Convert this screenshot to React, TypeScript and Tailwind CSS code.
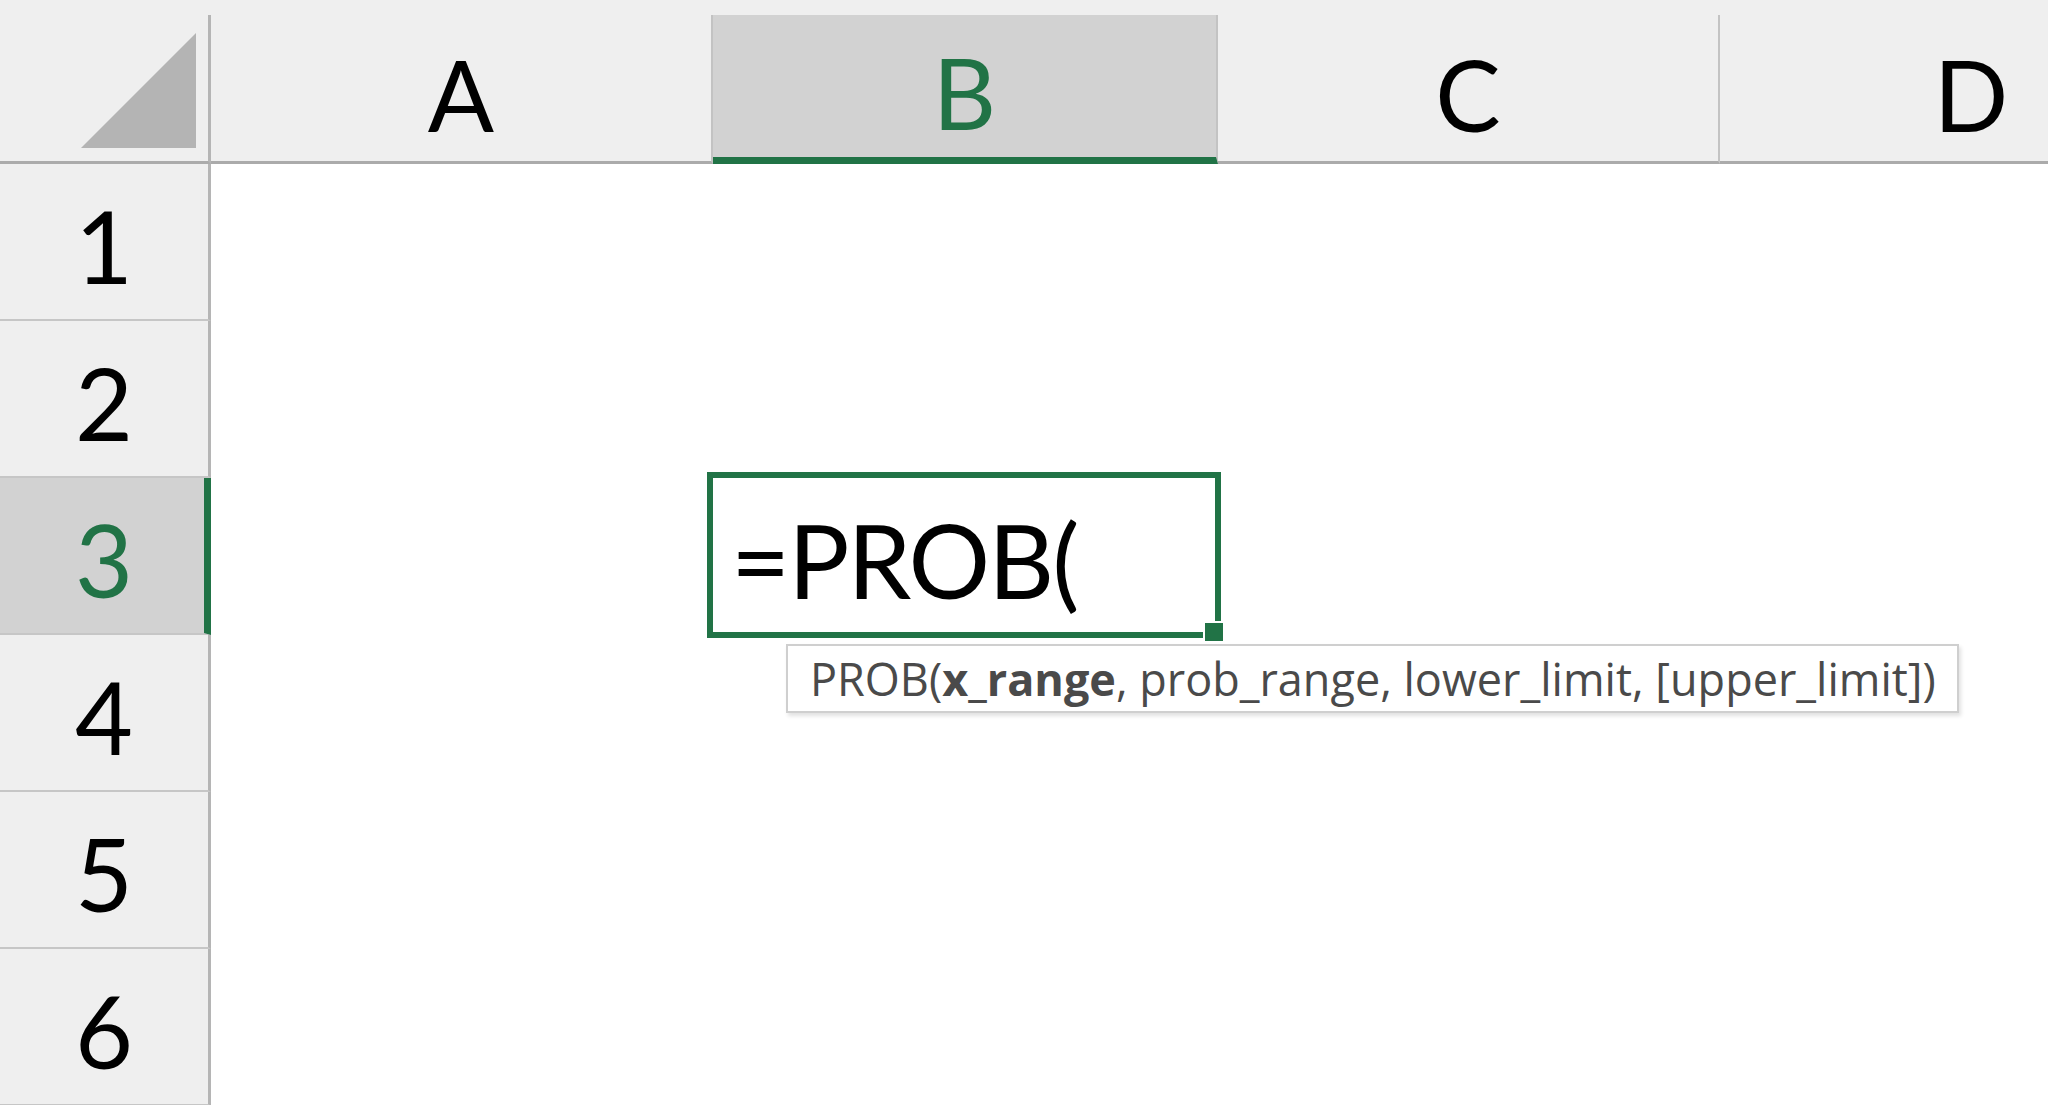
import React from "react";

const ROWS = [1, 2, 3, 4, 5, 6];

function ColHeader({ label, selected, last }: { label: string; selected?: boolean; last?: boolean }) {
  const width = selected ? "w-[505px]" : "w-[502px]";
  return (
    <div className={`${width} shrink-0 flex flex-col`}>
      <div className="h-[15px] bg-[#efefef]" />
      <div
        className={`flex-1 flex items-center justify-center pt-[12px] ${last ? "" : "border-r-2 border-[#c3c3c3]"} ${
          selected ? "bg-[#d2d2d2] text-[#217346] border-b-[7px] border-b-[#217346]" : "bg-[#efefef] text-black border-b-[3px] border-b-[#ababab]"
        }`}
      >
        <span className="text-[98px] leading-none">{label}</span>
      </div>
    </div>
  );
}

export default function App() {
  return (
    <div
      className="w-[2048px] h-[1105px] overflow-hidden bg-white relative"
      style={{ fontFamily: "Lato, 'Open Sans', sans-serif" }}
    >
      {/* Header row */}
      <div className="flex h-[164px] overflow-hidden">
        <div className="w-[211px] shrink-0 flex flex-col">
          <div className="h-[15px] bg-[#efefef]" />
          <div className="flex-1 bg-[#efefef] border-r-[3px] border-[#b5b5b5] border-b-[3px] border-b-[#ababab] relative">
            <svg className="absolute left-0 top-0" width="208" height="146" viewBox="0 0 208 146">
              <polygon points="196,18 196,133 81,133" fill="#b4b4b4" />
            </svg>
          </div>
        </div>
        <ColHeader label="A" />
        <ColHeader label="B" selected />
        <ColHeader label="C" />
        <ColHeader label="D" last />
      </div>

      {/* Rows */}
      {ROWS.map((r) => {
        const sel = r === 3;
        return (
          <div key={r} className="flex h-[157px]">
            <div
              className={`w-[211px] shrink-0 flex items-center justify-center pt-[6px] border-b-2 ${
                sel
                  ? "bg-[#d2d2d2] text-[#217346] border-r-[7px] border-r-[#217346] pl-[4px] border-b-[#c6c6c6]"
                  : "bg-[#efefef] text-black border-r-[3px] border-r-[#b5b5b5] border-b-[#c6c6c6]"
              }`}
            >
              <span className="text-[100px] leading-none">{r}</span>
            </div>
            <div className="w-[502px] shrink-0" />
            <div className="w-[505px] shrink-0 relative">
              {sel && (
                <>
                  <div className="absolute left-[-6px] top-[-6px] right-[-3px] bottom-[-3px] border-[6px] border-[#217346]" />
                  <div className="absolute left-[18px] bottom-[24px] text-[102px] leading-none tracking-[-2px] text-black whitespace-nowrap">
                    =PROB(
                  </div>
                  <div className="absolute right-[-7px] bottom-[-8px] w-[22px] h-[22px] bg-white p-[2px]">
                    <div className="w-full h-full bg-[#217346]" />
                  </div>
                </>
              )}
            </div>
            <div className="flex-1" />
          </div>
        );
      })}

      {/* Tooltip */}
      <div
        className="absolute left-[786px] top-[644px] w-[1173px] h-[69px] bg-white border-2 border-[#cfcfcf] shadow-[2px_3px_4px_rgba(0,0,0,0.12)] flex items-center pl-[22px] text-[#4a4a4a] whitespace-nowrap"
        style={{ fontFamily: "'Open Sans', 'Noto Sans', sans-serif" }}
      >
        <span className="text-[45px] leading-none">
          PROB(<b className="font-bold">x_range</b>, prob_range, lower_limit, [upper_limit])
        </span>
      </div>
    </div>
  );
}
